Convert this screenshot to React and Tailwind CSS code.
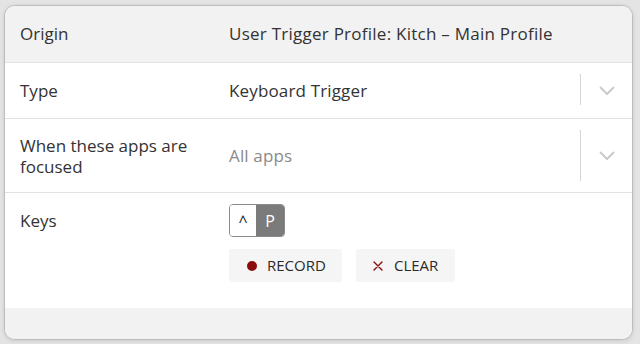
const FONT = { fontFamily: '"Open Sans", "Noto Sans", sans-serif' }

function Chevron() {
  return (
    <svg width="16" height="10" viewBox="0 0 16 10" fill="none" className="text-[#c8c8c8]">
      <path d="M1.5 1.5 L8 8 L14.5 1.5" stroke="currentColor" strokeWidth="1.8" strokeLinecap="round" strokeLinejoin="round" />
    </svg>
  )
}

function SelectRow({ label, value, muted, height, sepTop, sepBottom }) {
  return (
    <div className={`flex items-center border-t border-[#e2e2e2] bg-white ${height}`}>
      <div className="w-[224px] pl-[15px] pr-2 text-[17px] leading-[21px] text-[#333]">{label}</div>
      <div className={`flex-1 text-[17px] tracking-[0.15px] leading-[21px] ${muted ? 'text-[#8a8a8a]' : 'text-[#333]'}`}>{value}</div>
      <div className={`w-px self-stretch bg-[#d6d6d6] ${sepTop} ${sepBottom}`} />
      <div className="w-[51px] flex items-center justify-center pl-[1px]">
        <Chevron />
      </div>
    </div>
  )
}

export default function App() {
  return (
    <div className="w-[640px] h-[344px] bg-[#e4e4e4] pt-[5px] pl-[4px] pr-[7px] pb-[4px] overflow-hidden" style={FONT}>
      <div className="h-[335px] flex flex-col rounded-[11px] border border-[#bdbdbd] bg-white overflow-hidden shadow-[0_1px_4px_rgba(0,0,0,0.12)]">
        {/* Origin */}
        <div className="h-[56px] flex items-center bg-[#f2f2f2] pb-[1px]">
          <div className="w-[224px] pl-[15px] text-[17px] leading-[21px] text-[#333]">Origin</div>
          <div className="text-[17px] tracking-[0.25px] leading-[21px] text-[#333]">User Trigger Profile: Kitch – Main Profile</div>
        </div>

        <SelectRow label="Type" value="Keyboard Trigger" height="h-[56px]" sepTop="mt-[11px]" sepBottom="mb-[13px]" />
        <SelectRow label="When these apps are focused" value="All apps" muted height="h-[74px]" sepTop="mt-[11px]" sepBottom="mb-[11px]" />

        {/* Keys */}
        <div className="flex-1 flex border-t border-[#e2e2e2] bg-white pt-[11px]">
          <div className="w-[224px] pl-[15px] pt-[6px] text-[17px] leading-[21px] text-[#333]">Keys</div>
          <div className="flex flex-col gap-[12px]">
            <div className="flex h-[33px] w-[56px] rounded-[4px] border border-[#8a8a8a] overflow-hidden text-[16px]">
              <div className="w-[26px] flex items-center justify-center bg-white text-[#222]">^</div>
              <div className="flex-1 flex items-center justify-center bg-[#7b7b7b] text-white font-medium">P</div>
            </div>
            <div className="flex gap-[14px]">
              <button className="h-[33px] w-[113px] flex items-center gap-[10px] pl-[18px] rounded-[3px] bg-[#f5f5f5] text-[15px] text-[#2a2a2a]">
                <span className="w-[10px] h-[10px] rounded-full bg-[#8b0c0c]" />
                RECORD
              </button>
              <button className="h-[33px] w-[99px] flex items-center gap-[11px] pl-[17px] rounded-[3px] bg-[#f5f5f5] text-[15px] text-[#2a2a2a]">
                <svg width="10" height="10" viewBox="0 0 10 10">
                  <path d="M1 1 L9 9 M9 1 L1 9" stroke="#8b0c0c" strokeWidth="1.4" strokeLinecap="round" />
                </svg>
                CLEAR
              </button>
            </div>
          </div>
        </div>

        {/* Footer */}
        <div className="h-[31px] bg-[#f2f2f2]" />
      </div>
    </div>
  )
}
